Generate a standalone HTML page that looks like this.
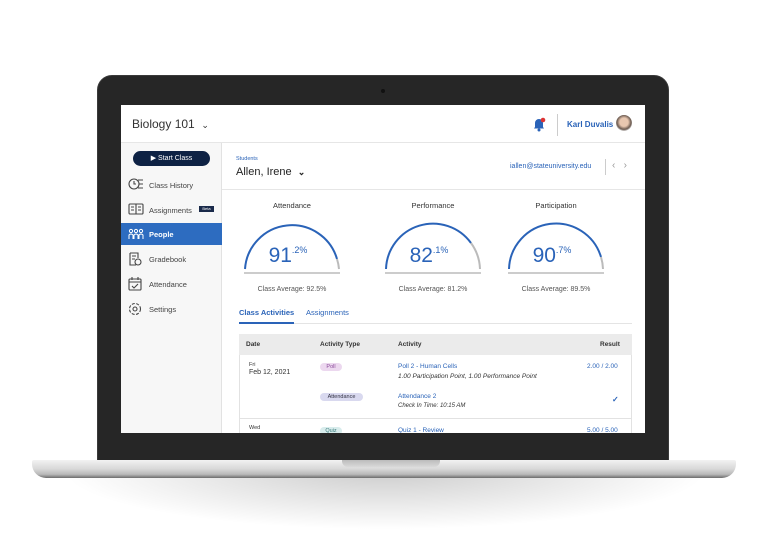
<!DOCTYPE html>
<html><head><style>
*{margin:0;padding:0;box-sizing:border-box}
body{width:768px;height:558px;background:#fff;position:relative;overflow:hidden;font-family:"Liberation Sans",sans-serif}
.a{position:absolute}
.t{position:absolute;white-space:nowrap}
.blue{color:#2a63b8}
.ic{position:absolute;left:7px}
</style></head><body>
<!-- shadow -->
<div class="a" style="left:60px;top:470px;width:650px;height:60px;background:radial-gradient(ellipse at 50% 0%,rgba(0,0,0,.2),rgba(0,0,0,0) 70%)"></div>
<!-- lid -->
<div class="a" style="left:97px;top:75px;width:572px;height:390px;background:#262626;border-radius:15px 15px 0 0;border:1px solid #3a3a3a"></div>
<div class="a" style="left:381px;top:89px;width:4px;height:4px;border-radius:50%;background:#111"></div>
<!-- base -->
<div class="a" style="left:32px;top:460px;width:704px;height:18px;background:linear-gradient(#f2f2f2,#d8d8d8 50%,#b8b8b8 80%,#6c6c6c);border-radius:2px 2px 14px 14px"></div>
<div class="a" style="left:342px;top:460px;width:98px;height:7px;background:linear-gradient(#bbb,#d9d9d9);border-radius:0 0 6px 6px"></div>
<!-- screen -->
<div class="a" style="left:121px;top:105px;width:524px;height:328px;background:#fff;overflow:hidden">
 <div class="t" style="left:11px;top:12px;font-size:12px;color:#333">Biology 101 &nbsp;<span style="font-size:9px">⌄</span></div>
 <svg class="a" style="left:411px;top:11px" width="14" height="16" viewBox="0 0 14 16"><path d="M3 11V7a4 4 0 0 1 8 0v4l1 1.5H2z" fill="#2a63b8"/><circle cx="7" cy="14" r="1.5" fill="#2a63b8"/><circle cx="11" cy="4" r="2.3" fill="#d33"/></svg>
 <div class="a" style="left:436px;top:9px;width:1px;height:22px;background:#ccc"></div>
 <div class="t blue" style="left:446px;top:15px;font-size:8px;font-weight:bold">Karl Duvalis</div>
 <div class="a" style="left:495px;top:10px;width:16px;height:16px;border-radius:50%;background:radial-gradient(circle at 50% 45%,#e8c7b0 35%,#6b5a50 60%,#ddd 75%)"></div>
 <div class="a" style="left:0;top:37px;width:524px;height:1px;background:#e6e6e6"></div>
 <!-- sidebar -->
 <div class="a" style="left:0;top:38px;width:101px;height:290px;background:#f7f7f7;border-right:1px solid #e2e2e2"></div>
 <div class="a" style="left:12px;top:46px;width:77px;height:15px;border-radius:8px;background:#0e2244;color:#fff;font-size:7px;text-align:center;line-height:15px">▶ Start Class</div>
 <svg class="ic" style="top:73px" width="16" height="12" viewBox="0 0 16 12" fill="none" stroke="#444" stroke-width="1.1"><circle cx="6" cy="6" r="5"/><path d="M6 3v3h2M10 2h5M11 6h4M10 10h5"/></svg>
 <div class="t" style="left:28px;top:76px;font-size:7.5px;color:#444">Class History</div>
 <svg class="ic" style="top:98px" width="16" height="12" viewBox="0 0 16 12" fill="none" stroke="#444" stroke-width="1.1"><rect x="1" y="1" width="14" height="10" rx="1"/><path d="M8 1v10M3 4h3M3 7h3M10 4h3M10 7h3"/></svg>
 <div class="t" style="left:28px;top:101px;font-size:7.5px;color:#444">Assignments</div>
 <div class="a" style="left:78px;top:101px;width:15px;height:6px;background:#1a2a4a;color:#fff;font-size:4px;text-align:center;line-height:6px">Beta</div>
 <div class="a" style="left:0;top:118px;width:101px;height:22px;background:#2d6cc0"></div>
 <svg class="ic" style="top:123px" width="16" height="12" viewBox="0 0 16 12" fill="none" stroke="#fff" stroke-width="1"><circle cx="3" cy="3" r="1.6"/><circle cx="8" cy="3" r="1.6"/><circle cx="13" cy="3" r="1.6"/><path d="M1 11V7q2-2 4 0v4M6 11V7q2-2 4 0v4M11 11V7q2-2 4 0v4"/></svg>
 <div class="t" style="left:28px;top:125px;font-size:7.5px;color:#fff;font-weight:bold">People</div>
 <svg class="ic" style="top:147px" width="14" height="14" viewBox="0 0 14 14" fill="none" stroke="#444" stroke-width="1.1"><path d="M2 1h8v5M2 1v12h6"/><path d="M4 4h4M4 7h3"/><circle cx="10" cy="10" r="3"/></svg>
 <div class="t" style="left:28px;top:150px;font-size:7.5px;color:#444">Gradebook</div>
 <svg class="ic" style="top:172px" width="14" height="14" viewBox="0 0 14 14" fill="none" stroke="#444" stroke-width="1.1"><rect x="1" y="2" width="12" height="11" rx="1"/><path d="M1 5h12M4 0v3M10 0v3M4 9l2 2 4-4"/></svg>
 <div class="t" style="left:28px;top:175px;font-size:7.5px;color:#444">Attendance</div>
 <svg class="ic" style="top:197px" width="14" height="14" viewBox="0 0 14 14" fill="none" stroke="#444" stroke-width="1.1"><circle cx="7" cy="7" r="2"/><circle cx="7" cy="7" r="5.5" stroke-dasharray="3 1.5"/></svg>
 <div class="t" style="left:28px;top:200px;font-size:7.5px;color:#444">Settings</div>
 <!-- content -->
 <div class="t blue" style="left:115px;top:51px;font-size:5.5px">Students</div>
 <div class="t" style="left:115px;top:61px;font-size:11px;color:#222">Allen, Irene &nbsp;<span style="font-size:9px;font-weight:bold">⌄</span></div>
 <div class="t blue" style="left:389px;top:58px;font-size:7px">iallen@stateuniversity.edu</div>
 <div class="a" style="left:484px;top:54px;width:1px;height:16px;background:#ccc"></div>
 <div class="t" style="left:491px;top:55px;font-size:10px;color:#999">‹ &nbsp; ›</div>
 <div class="a" style="left:101px;top:84px;width:423px;height:1px;background:#e6e6e6"></div>
 <!-- gauges -->
 <svg class="a" style="left:101px;top:90px" width="423" height="110">
  <g font-family="Liberation Sans,sans-serif" text-anchor="middle">
   <g transform="translate(70,0)">
    <text x="0" y="13" font-size="7.5" fill="#333">Attendance</text>
    <path d="M-47 74A47 47 0 0 1 45 64" fill="none" stroke="#2a63b8" stroke-width="2"/>
    <path d="M45 64A47 47 0 0 1 47 74" fill="none" stroke="#bbb" stroke-width="2"/>
    <rect x="-48" y="77" width="96" height="2" fill="#ccc"/>
    <text x="-4" y="67" font-size="21" fill="#2a63b8">91<tspan font-size="9" dy="-9">.2%</tspan></text>
    <text x="0" y="96" font-size="7" fill="#555">Class Average: 92.5%</text>
   </g>
   <g transform="translate(211,0)">
    <text x="0" y="13" font-size="7.5" fill="#333">Performance</text>
    <path d="M-47 74A47 47 0 0 1 38 48" fill="none" stroke="#2a63b8" stroke-width="2"/>
    <path d="M38 48A47 47 0 0 1 47 74" fill="none" stroke="#bbb" stroke-width="2"/>
    <rect x="-48" y="77" width="96" height="2" fill="#ccc"/>
    <text x="-4" y="67" font-size="21" fill="#2a63b8">82<tspan font-size="9" dy="-9">.1%</tspan></text>
    <text x="0" y="96" font-size="7" fill="#555">Class Average: 81.2%</text>
   </g>
   <g transform="translate(334,0)">
    <text x="0" y="13" font-size="7.5" fill="#333">Participation</text>
    <path d="M-47 74A47 47 0 0 1 45 62" fill="none" stroke="#2a63b8" stroke-width="2"/>
    <path d="M45 62A47 47 0 0 1 47 74" fill="none" stroke="#bbb" stroke-width="2"/>
    <rect x="-48" y="77" width="96" height="2" fill="#ccc"/>
    <text x="-4" y="67" font-size="21" fill="#2a63b8">90<tspan font-size="9" dy="-9">.7%</tspan></text>
    <text x="0" y="96" font-size="7" fill="#555">Class Average: 89.5%</text>
   </g>
  </g>
 </svg>
 <!-- tabs -->
 <div class="t blue" style="left:118px;top:203px;font-size:7.5px;font-weight:bold">Class Activities</div>
 <div class="t blue" style="left:185px;top:203px;font-size:7.5px">Assignments</div>
 <div class="a" style="left:118px;top:218px;width:393px;height:1px;background:#e4e4e4"></div>
 <div class="a" style="left:118px;top:217px;width:55px;height:2px;background:#2a63b8"></div>
 <!-- table -->
 <div class="a" style="left:118px;top:229px;width:393px;height:110px;border:1px solid #e2e2e2"></div>
 <div class="a" style="left:118px;top:229px;width:393px;height:21px;background:#ebebeb"></div>
 <div class="t" style="left:125px;top:236px;font-size:6.5px;color:#333;font-weight:bold">Date</div>
 <div class="t" style="left:199px;top:236px;font-size:6.5px;color:#333;font-weight:bold">Activity Type</div>
 <div class="t" style="left:277px;top:236px;font-size:6.5px;color:#333;font-weight:bold">Activity</div>
 <div class="t" style="left:479px;top:236px;font-size:6.5px;color:#333;font-weight:bold">Result</div>
 <div class="t" style="left:128px;top:257px;font-size:5.5px;color:#333">Fri</div>
 <div class="t" style="left:128px;top:264px;font-size:7px;color:#333">Feb 12, 2021</div>
 <div class="a" style="left:199px;top:258px;width:22px;height:8px;border-radius:4px;background:#ecd8ef;color:#8b4a9a;font-size:5.5px;text-align:center;line-height:8px">Poll</div>
 <div class="t blue" style="left:277px;top:258px;font-size:6.5px">Poll 2 - Human Cells</div>
 <div class="t" style="left:277px;top:268px;font-size:6.5px;color:#333;font-style:italic">1.00 Participation Point, 1.00 Performance Point</div>
 <div class="t blue" style="left:466px;top:258px;font-size:6.5px">2.00 / 2.00</div>
 <div class="a" style="left:199px;top:288px;width:43px;height:8px;border-radius:4px;background:#d9d9ef;color:#334;font-size:5.5px;text-align:center;line-height:8px">Attendance</div>
 <div class="t blue" style="left:277px;top:288px;font-size:6.5px">Attendance 2</div>
 <div class="t" style="left:277px;top:298px;font-size:6px;color:#333;font-style:italic">Check In Time: 10:15 AM</div>
 <div class="t blue" style="left:491px;top:290px;font-size:8px;font-weight:bold">✓</div>
 <div class="a" style="left:118px;top:313px;width:393px;height:1px;background:#e2e2e2"></div>
 <div class="t" style="left:128px;top:320px;font-size:5.5px;color:#333">Wed</div>
 <div class="a" style="left:199px;top:322px;width:22px;height:8px;border-radius:4px;background:#d8ecec;color:#3a7a7a;font-size:5.5px;text-align:center;line-height:8px">Quiz</div>
 <div class="t blue" style="left:277px;top:322px;font-size:6.5px">Quiz 1 - Review</div>
 <div class="t blue" style="left:466px;top:322px;font-size:6.5px">5.00 / 5.00</div>
</div>
</body></html>
